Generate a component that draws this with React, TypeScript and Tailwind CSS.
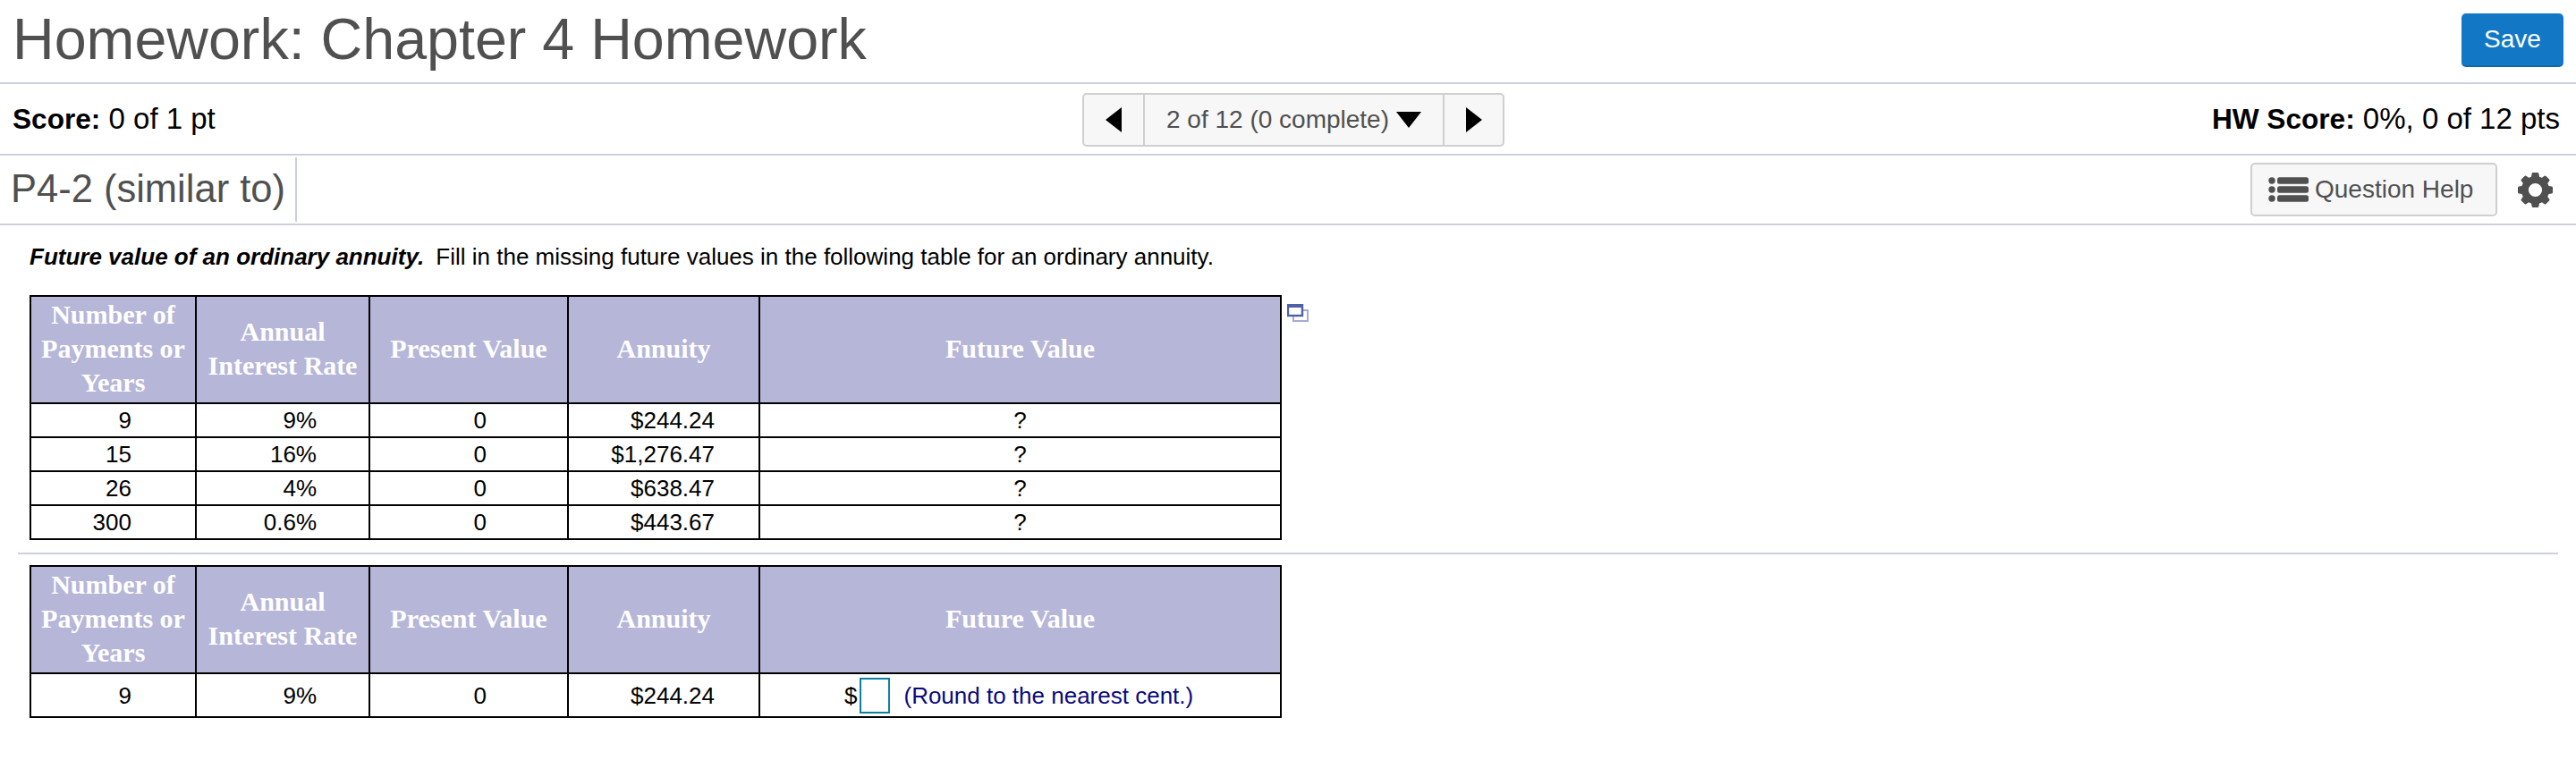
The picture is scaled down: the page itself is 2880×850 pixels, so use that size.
import React from "react";

const headerLabels = [
  <>Number of<br />Payments or<br />Years</>,
  <>Annual<br />Interest Rate</>,
  <>Present Value</>,
  <>Annuity</>,
  <>Future Value</>,
];

const rows = [
  ["9", "9%", "0", "$244.24"],
  ["15", "16%", "0", "$1,276.47"],
  ["26", "4%", "0", "$638.47"],
  ["300", "0.6%", "0", "$443.67"],
];

function Colgroup() {
  return (
    <colgroup>
      <col className="w-[185px]" />
      <col className="w-[194px]" />
      <col className="w-[222px]" />
      <col className="w-[214px]" />
      <col className="w-[583px]" />
    </colgroup>
  );
}

function HeadRow() {
  return (
    <thead>
      <tr className="h-[120px]">
        {headerLabels.map((label, i) => (
          <th
            key={i}
            className="border-2 border-black bg-[#b6b6d9] p-0 pb-[3px] text-center align-middle font-['Liberation_Serif',serif] text-[30px] leading-[38px] font-bold text-white"
          >
            {label}
          </th>
        ))}
      </tr>
    </thead>
  );
}

const cellBase = "border-2 border-black p-0 align-middle text-[26px] leading-[30px] text-black";

function DataCells({ row }: { row: string[] }) {
  return (
    <>
      <td className={`${cellBase} pr-[71px] text-right`}>{row[0]}</td>
      <td className={`${cellBase} pr-[58px] text-right`}>{row[1]}</td>
      <td className={`${cellBase} pr-[90px] text-right`}>{row[2]}</td>
      <td className={`${cellBase} pr-[49px] text-right`}>{row[3]}</td>
    </>
  );
}

function ListIcon() {
  return (
    <svg width="45" height="28" viewBox="0 0 45 28" className="shrink-0">
      <g fill="#505050">
        <circle cx="4" cy="4" r="3.7" />
        <circle cx="4" cy="14" r="3.7" />
        <circle cx="4" cy="24" r="3.7" />
        <rect x="10" y="0.3" width="35" height="7.4" rx="2.5" />
        <rect x="10" y="10.3" width="35" height="7.4" rx="2.5" />
        <rect x="10" y="20.3" width="35" height="7.4" rx="2.5" />
      </g>
    </svg>
  );
}

function GearIcon() {
  const teeth = [0, 45, 90, 135, 180, 225, 270, 315];
  return (
    <svg width="39" height="39" viewBox="0 0 39 39" className="shrink-0">
      <g fill="#505050">
        {teeth.map((a) => (
          <path key={a} d="M14.3 9 L15.6 1.2 Q15.8 0 17 0 H22 Q23.2 0 23.4 1.2 L24.7 9 Z" transform={`rotate(${a} 19.5 19.5)`} />
        ))}
      </g>
      <circle cx="19.5" cy="19.5" r="11.6" fill="none" stroke="#505050" strokeWidth="8" />
    </svg>
  );
}

function PopoutIcon() {
  return (
    <svg width="24" height="20" viewBox="0 0 24 20" className="mt-[10px] ml-[6px] shrink-0">
      <rect x="7" y="7" width="16" height="12" fill="#fff" stroke="#a3abd6" strokeWidth="2" />
      <rect x="1" y="1" width="16" height="12" fill="#fff" stroke="#5060a8" strokeWidth="2.4" />
      <rect x="0" y="0" width="18" height="4" fill="#5060a8" />
    </svg>
  );
}

export default function App() {
  return (
    <div className="h-[850px] w-[2880px] overflow-hidden bg-white font-['Liberation_Sans',Arial,sans-serif]">
      <header className="flex h-[94px] items-start justify-between border-b-2 border-[#ccd0de] px-[14px]">
        <h1 className="mt-[8px] text-[64.6px] leading-[72px] font-normal text-[#505050]">
          Homework: Chapter 4 Homework
        </h1>
        <button className="mt-[15px] flex h-[60px] w-[114px] items-center justify-center rounded-[5px] border-b-2 border-[#0f68ad] bg-[#1278c6] text-[28px] text-white">
          Save
        </button>
      </header>

      <div className="relative flex h-[80px] items-center justify-between border-b-2 border-[#ccd0de] pr-[18px] pl-[14px] text-[33px] text-black">
        <div>
          <span className="text-[31.6px] font-bold">Score:</span> 0 of 1 pt
        </div>
        <div className="absolute top-[10px] left-[1210px] flex h-[60px] w-[472px] rounded-[5px] border-2 border-[#cfcfcf] bg-[#f7f7f7]">
          <div className="flex w-[68px] items-center justify-center border-r-2 border-[#cfcfcf]">
            <svg width="18" height="28" viewBox="0 0 18 28"><path d="M18 0V28L0 14Z" fill="#000" /></svg>
          </div>
          <div className="flex flex-1 items-center justify-center gap-[8px] text-[28px] text-[#505050]">
            <span>2 of 12 (0 complete)</span>
            <svg width="28" height="18" viewBox="0 0 28 18"><path d="M0 0H28L14 18Z" fill="#000" /></svg>
          </div>
          <div className="flex w-[67px] items-center justify-center border-l-2 border-[#cfcfcf]">
            <svg width="18" height="28" viewBox="0 0 18 28"><path d="M0 0V28L18 14Z" fill="#000" /></svg>
          </div>
        </div>
        <div>
          <span className="text-[31.6px] font-bold">HW Score:</span> 0%, 0 of 12 pts
        </div>
      </div>

      <div className="flex h-[78px] items-center justify-between border-b-2 border-[#ccd0de] pr-[26px] pl-[12px]">
        <div className="flex h-[72px] items-center border-r-2 border-[#ccd0de] pr-[11px] text-[43.5px] text-[#505050]">
          P4-2 (similar to)
        </div>
        <div className="flex items-center gap-[23px]">
          <button className="flex h-[60px] w-[276px] items-center justify-start gap-[7px] rounded-[5px] border-2 border-[#cfcfcf] bg-[#f7f7f7] pl-[18px] text-[28px] text-[#505050]">
            <ListIcon />
            <span>Question Help</span>
          </button>
          <GearIcon />
        </div>
      </div>

      <main className="px-[20px]">
        <p className="mt-[20px] ml-[13px] text-[26px] leading-[30px] text-black">
          <b><i>Future value of an ordinary annuity.</i></b>
          {"  "}
          <span className="ml-[6px]">Fill in the missing future values in the following table for an ordinary annuity.</span>
        </p>

        <div className="mt-[28px] ml-[13px] flex items-start">
          <table className="w-[1398px] table-fixed border-collapse">
            <Colgroup />
            <HeadRow />
            <tbody>
              {rows.map((row) => (
                <tr key={row[0]} className="h-[38px]">
                  <DataCells row={row} />
                  <td className={`${cellBase} text-center`}>?</td>
                </tr>
              ))}
            </tbody>
          </table>
          <PopoutIcon />
        </div>

        <div className="mt-[14px] h-[2px] w-[2840px] bg-[#ccd0de]" />

        <div className="mt-[12px] ml-[13px]">
          <table className="w-[1398px] table-fixed border-collapse">
            <Colgroup />
            <HeadRow />
            <tbody>
              <tr className="h-[49px]">
                <DataCells row={rows[0]} />
                <td className={cellBase}>
                  <div className="flex items-center pl-[94px]">
                    <span>$</span>
                    <span className="ml-[3px] h-[40px] w-[34px] border-2 border-[#0d7f9e]" />
                    <span className="ml-[15px] text-[#0a0a80]">(Round to the nearest cent.)</span>
                  </div>
                </td>
              </tr>
            </tbody>
          </table>
        </div>
      </main>
    </div>
  );
}
